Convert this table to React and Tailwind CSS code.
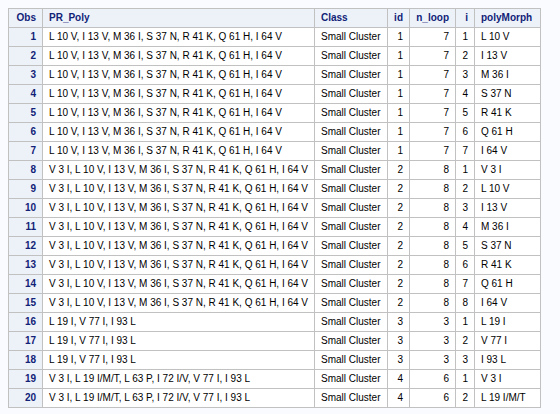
const base = ['L 10 V', 'I 13 V', 'M 36 I', 'S 37 N', 'R 41 K', 'Q 61 H', 'I 64 V'];
const withV3 = ['V 3 I', ...base];
const c3 = ['L 19 I', 'V 77 I', 'I 93 L'];
const c4 = ['V 3 I', 'L 19 I/M/T', 'L 63 P', 'I 72 I/V', 'V 77 I', 'I 93 L'];

const rows = [];
base.forEach((m, k) => rows.push({ poly: base.join(', '), id: 1, n: 7, i: k + 1, m }));
withV3.forEach((m, k) => rows.push({ poly: withV3.join(', '), id: 2, n: 8, i: k + 1, m }));
c3.forEach((m, k) => rows.push({ poly: c3.join(', '), id: 3, n: 3, i: k + 1, m }));
c4.slice(0, 2).forEach((m, k) => rows.push({ poly: c4.join(', '), id: 4, n: 6, i: k + 1, m }));

const th = 'border border-[#c1c1c1] bg-[#edf2f9] text-[#112277] font-bold h-[19px] p-0 px-[6px] text-left whitespace-nowrap overflow-hidden';
const td = 'border border-[#c1c1c1] h-[19px] p-0 px-[6px] text-black whitespace-nowrap overflow-hidden';

export default function App() {
  return (
    <div className="min-h-[414px] w-[560px] bg-[#fafbfe] p-2 font-['Liberation_Sans',Arial,sans-serif] text-[10px] leading-[12px]">
      <table className="table-fixed border-collapse bg-white w-[532px]">
        <colgroup>
          <col className="w-[34px]" />
          <col className="w-[272px]" />
          <col className="w-[73px]" />
          <col className="w-[22px]" />
          <col className="w-[46px]" />
          <col className="w-[19px]" />
          <col className="w-[66px]" />
        </colgroup>
        <thead>
          <tr>
            <th className={th + ' text-right'}>Obs</th>
            <th className={th}>PR_Poly</th>
            <th className={th}>Class</th>
            <th className={th + ' text-right'}>id</th>
            <th className={th + ' text-right'}>n_loop</th>
            <th className={th + ' text-right'}>i</th>
            <th className={th}>polyMorph</th>
          </tr>
        </thead>
        <tbody>
          {rows.map((r, k) => (
            <tr key={k}>
              <th className={th + ' text-right'}>{k + 1}</th>
              <td className={td}>{r.poly}</td>
              <td className={td}>Small Cluster</td>
              <td className={td + ' text-right'}>{r.id}</td>
              <td className={td + ' text-right'}>{r.n}</td>
              <td className={td + ' text-right'}>{r.i}</td>
              <td className={td}>{r.m}</td>
            </tr>
          ))}
        </tbody>
      </table>
    </div>
  );
}
